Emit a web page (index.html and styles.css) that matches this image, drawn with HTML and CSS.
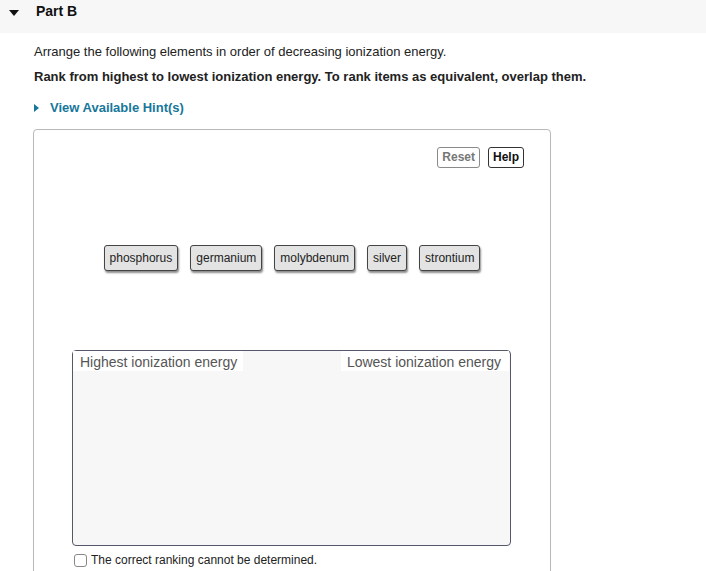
FILE: index.html
```html
<!DOCTYPE html>
<html>
<head>
<meta charset="utf-8">
<link rel="stylesheet" href="styles.css">
</head>
<body>
<div class="part-header">
  <span class="tri-down"></span>
  <span class="part-title">Part B</span>
</div>
<div class="content">
  <p class="prompt">Arrange the following elements in order of decreasing ionization energy.</p>
  <p class="instr">Rank from highest to lowest ionization energy. To rank items as equivalent, overlap them.</p>
  <div class="hint"><span class="tri-right"></span><span>View Available Hint(s)</span></div>
  <div class="panel">
    <div class="tools">
      <span class="btn btn-reset">Reset</span>
      <span class="btn btn-help">Help</span>
    </div>
    <div class="tiles">
      <span class="tile">phosphorus</span>
      <span class="tile">germanium</span>
      <span class="tile">molybdenum</span>
      <span class="tile">silver</span>
      <span class="tile">strontium</span>
    </div>
    <div class="dropzone">
      <span class="zlabel zl-left">Highest ionization energy</span>
      <span class="zlabel zl-right">Lowest ionization energy</span>
    </div>
    <label class="check"><span class="box"></span><span>The correct ranking cannot be determined.</span></label>
  </div>
</div>
</body>
</html>
```
FILE: styles.css
```css
html, body {
  margin: 0;
  padding: 0;
  background: #fff;
  font-family: "Liberation Sans", Arial, sans-serif;
  color: #222;
}
.part-header {
  height: 33px;
  background: #f7f7f7;
  display: flex;
  align-items: flex-start;
}
.tri-down {
  width: 0;
  height: 0;
  border-left: 5px solid transparent;
  border-right: 5px solid transparent;
  border-top: 6px solid #111;
  margin: 10px 0 0 9px;
}
.part-title {
  font-size: 14px;
  font-weight: bold;
  margin: 3px 0 0 17px;
  color: #111;
}
.content {
  padding-left: 33px;
}
.prompt {
  margin: 0;
  padding-top: 11px;
  font-size: 13px;
  line-height: 15px;
  padding-left: 1px;
}
.instr {
  margin: 10px 0 0 0;
  font-size: 13px;
  line-height: 15px;
  font-weight: bold;
  padding-left: 1px;
}
.hint {
  margin-top: 16px;
  display: flex;
  align-items: center;
  color: #17779a;
  font-weight: bold;
  font-size: 13px;
  line-height: 15px;
  padding-left: 1px;
}
.tri-right {
  width: 0;
  height: 0;
  border-top: 4px solid transparent;
  border-bottom: 4px solid transparent;
  border-left: 5px solid #17779a;
  margin-right: 11px;
}
.panel {
  margin-top: 14px;
  width: 516px;
  height: 460px;
  border: 1px solid #b8b8b8;
  border-radius: 4px;
}
.tools {
  display: flex;
  justify-content: flex-end;
  gap: 8px;
  padding: 17px 26px 0 0;
}
.btn {
  display: inline-block;
  font-size: 12px;
  font-weight: bold;
  line-height: 19px;
  padding: 0 4px;
  border-radius: 3px;
  background: #fff;
}
.btn-reset {
  color: #777;
  border: 1px solid #8a8a8a;
}
.btn-help {
  color: #111;
  border: 1px solid #333;
}
.tiles {
  display: flex;
  justify-content: center;
  gap: 12px;
  margin-top: 77px;
}
.tile {
  font-size: 12px;
  line-height: 24px;
  padding: 0 5px;
  background: #e3e3e3;
  border: 1px solid #444;
  border-radius: 3px;
  box-shadow: 1px 2px 2px rgba(0,0,0,0.45);
  color: #222;
}
.dropzone {
  margin: 79px 0 0 38px;
  width: 437px;
  height: 194px;
  border: 1px solid #55576a;
  border-radius: 4px;
  background: #f7f7f7;
  display: flex;
  justify-content: space-between;
  align-items: flex-start;
}
.zlabel {
  background: #fff;
  font-size: 14px;
  line-height: 18px;
  padding-top: 2px;
  color: #555;
}
.zl-left { padding-left: 7px; padding-right: 6px; }
.zl-right { padding-left: 6px; padding-right: 8px; margin-right: 1px; }
.check {
  display: flex;
  align-items: center;
  margin: 7px 0 0 40px;
  font-size: 12px;
  color: #222;
}
.box {
  width: 11px;
  height: 11px;
  border: 1px solid #888;
  border-radius: 3px;
  margin-right: 4px;
  background: #fff;
}
```
